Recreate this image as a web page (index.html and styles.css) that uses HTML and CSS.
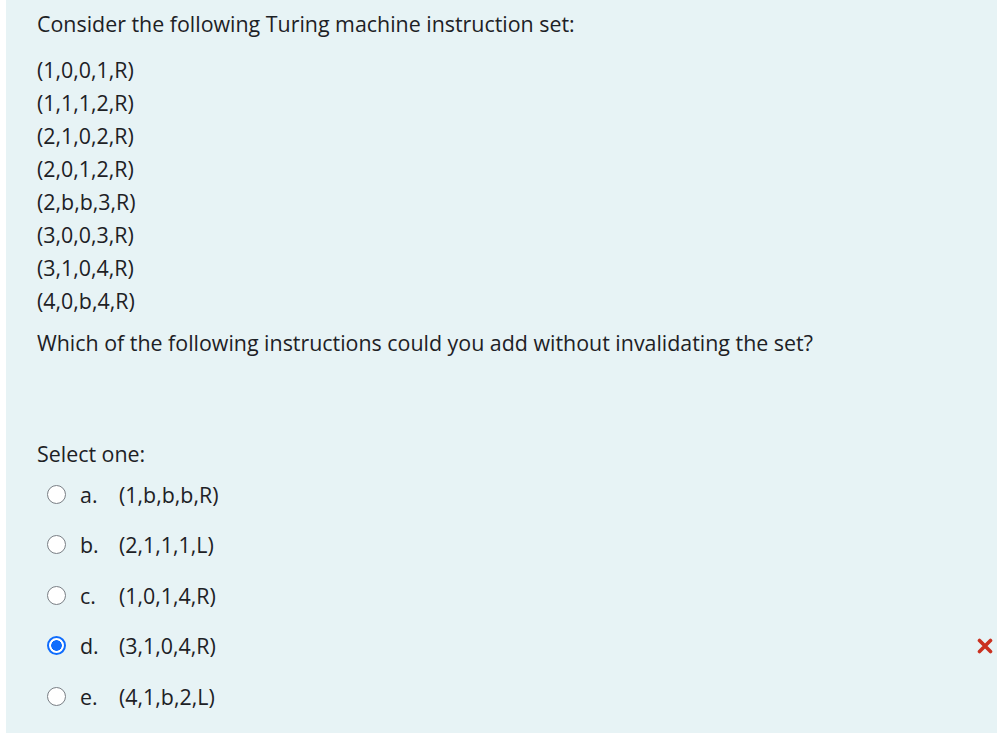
FILE: index.html
```html
<!DOCTYPE html>
<html>
<head>
<meta charset="utf-8">
<link rel="stylesheet" href="styles.css">
</head>
<body>
<div class="que">
  <p class="qtext">Consider the following Turing machine instruction set:</p>
  <div class="instr">
    <div class="line">(1,0,0,1,R)</div>
    <div class="line">(1,1,1,2,R)</div>
    <div class="line">(2,1,0,2,R)</div>
    <div class="line">(2,0,1,2,R)</div>
    <div class="line">(2,b,b,3,R)</div>
    <div class="line">(3,0,0,3,R)</div>
    <div class="line">(3,1,0,4,R)</div>
    <div class="line">(4,0,b,4,R)</div>
  </div>
  <p class="qtext which">Which of the following instructions could you add without invalidating the set?</p>
  <p class="qtext prompt">Select one:</p>
  <div class="answers">
    <div class="opt"><span class="radio"></span><span class="letter">a.</span><span class="ans">(1,b,b,b,R)</span></div>
    <div class="opt"><span class="radio"></span><span class="letter">b.</span><span class="ans">(2,1,1,1,L)</span></div>
    <div class="opt"><span class="radio"></span><span class="letter">c.</span><span class="ans">(1,0,1,4,R)</span></div>
    <div class="opt"><span class="radio checked"></span><span class="letter">d.</span><span class="ans">(3,1,0,4,R)</span>
      <svg class="wrong" width="16" height="16" viewBox="0 0 16 16"><path d="M2.5 2.5 L13.5 13.5 M13.5 2.5 L2.5 13.5" stroke="#ca3120" stroke-width="3.6" stroke-linecap="round"/></svg>
    </div>
    <div class="opt"><span class="radio"></span><span class="letter">e.</span><span class="ans">(4,1,b,2,L)</span></div>
  </div>
</div>
</body>
</html>
```
FILE: styles.css
```css
html, body {
  margin: 0;
  padding: 0;
  background: #ffffff;
}
body {
  font-family: "Open Sans", "Noto Sans", sans-serif;
  font-size: 21.4px;
  color: #1d2125;
}
.que {
  margin-left: 6px;
  background: #e7f3f5;
  min-height: 733px;
  box-sizing: border-box;
  padding: 9px 3px 0 31px;
  display: flex;
  flex-direction: column;
}
.qtext {
  margin: 0;
  line-height: 30px;
  height: 30px;
  white-space: nowrap;
}
.instr {
  margin-top: 13.5px;
  display: flex;
  flex-direction: column;
}
.line {
  height: 33px;
  line-height: 33px;
}
.which {
  margin-top: 11.5px;
}
.prompt {
  margin-top: 81px;
}
.answers {
  display: flex;
  flex-direction: column;
}
.opt {
  height: 50.5px;
  display: flex;
  align-items: center;
}
.radio {
  width: 19px;
  height: 19px;
  box-sizing: border-box;
  border: 1.5px solid #7a7f85;
  border-radius: 50%;
  background: #fff;
  margin-left: 10px;
  margin-right: 14px;
  flex: none;
}
.radio.checked {
  border: 2px solid #0f6cfd;
  background: radial-gradient(circle, #0f6cfd 0 5px, #ffffff 5.6px);
}
.letter {
  width: 39px;
}
.wrong {
  margin-left: auto;
  margin-right: 1px;
}
```
